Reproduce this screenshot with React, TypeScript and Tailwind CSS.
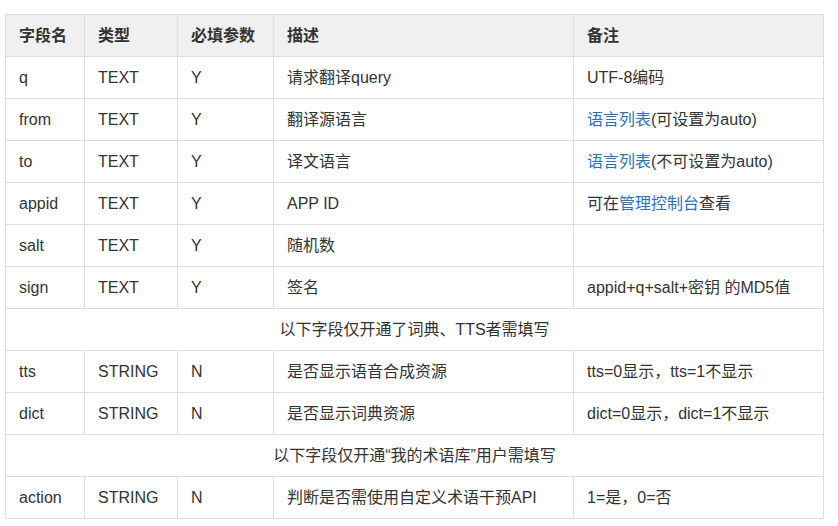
const link = "text-[#2f6fb5]";

type Row = { c: React.ReactNode[] } | { span: string };

const rows: Row[] = [
  { c: ["q", "TEXT", "Y", "请求翻译query", "UTF-8编码"] },
  { c: ["from", "TEXT", "Y", "翻译源语言", <><span className={link}>语言列表</span>(可设置为auto)</>] },
  { c: ["to", "TEXT", "Y", "译文语言", <><span className={link}>语言列表</span>(不可设置为auto)</>] },
  { c: ["appid", "TEXT", "Y", "APP ID", <>可在<span className={link}>管理控制台</span>查看</>] },
  { c: ["salt", "TEXT", "Y", "随机数", ""] },
  { c: ["sign", "TEXT", "Y", "签名", "appid+q+salt+密钥 的MD5值"] },
  { span: "以下字段仅开通了词典、TTS者需填写" },
  { c: ["tts", "STRING", "N", "是否显示语音合成资源", "tts=0显示，tts=1不显示"] },
  { c: ["dict", "STRING", "N", "是否显示词典资源", "dict=0显示，dict=1不显示"] },
  { span: "以下字段仅开通“我的术语库”用户需填写" },
  { c: ["action", "STRING", "N", "判断是否需使用自定义术语干预API", "1=是，0=否"] },
];

const heads = ["字段名", "类型", "必填参数", "描述", "备注"];
const widths = ["w-[79px]", "w-[93px]", "w-[96px]", "w-[300px]", ""];

export default function App() {
  return (
    <div className="bg-white w-[838px] h-[526px] pt-[14px] pl-[5px]" style={{ fontFamily: '"Liberation Sans", Arial, "Noto Sans CJK SC", sans-serif' }}>
      <table className="w-[819px] border-collapse text-[16px] text-[#333] table-fixed">
        <thead>
          <tr className="bg-[#f0f0f0] h-[42px]">
            {heads.map((h, i) => (
              <th key={i} className={`border border-[#ddd] px-[13px] text-left font-bold ${widths[i]}`}>{h}</th>
            ))}
          </tr>
        </thead>
        <tbody>
          {rows.map((r, i) =>
            "span" in r ? (
              <tr key={i} className="h-[42px]">
                <td colSpan={5} className="border border-[#ddd] text-center">{r.span}</td>
              </tr>
            ) : (
              <tr key={i} className="h-[42px]">
                {r.c.map((c, j) => (
                  <td key={j} className="border border-[#ddd] px-[13px] whitespace-nowrap">{c}</td>
                ))}
              </tr>
            )
          )}
        </tbody>
      </table>
    </div>
  );
}
